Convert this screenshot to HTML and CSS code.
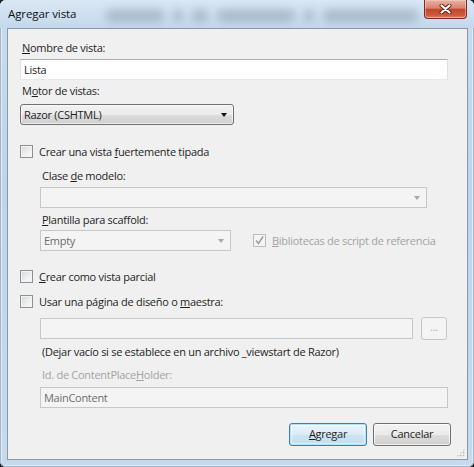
FILE: index.html
```html
<!DOCTYPE html>
<html lang="es">
 <head>
  <meta charset="utf-8" />
  <title>Agregar vista</title>
  <link rel="stylesheet" href="styles.css">
 </head>
 <body>
  <div class="window">
   <div class="titlebar">
    <span class="title">Agregar vista</span>
    <!-- whatever lies behind the glass, smeared -->
    <span class="glass">
     <i class="w1"></i><i class="w2"></i><i class="w3"></i><i class="w4"></i><i class="w5"></i><i class="w6"></i>
    </span>
    <span class="close">
     <svg width="13" height="10" viewBox="0 0 13 10">
      <path d="M2.5 1.5 L10.5 8.5 M10.5 1.5 L2.5 8.5" stroke="#5a1d12" stroke-width="4" stroke-linecap="round" />
      <path d="M2.5 1.5 L10.5 8.5 M10.5 1.5 L2.5 8.5" stroke="#fff" stroke-width="2.2" stroke-linecap="round" />
     </svg>
    </span>
   </div>
   <div class="client">
    <div class="lbl name-lbl"><u>N</u>ombre de vista:</div>
    <div class="text name-box">Lista</div>

    <div class="lbl engine-lbl">M<u>o</u>tor de vistas:</div>
    <div class="combo engine-box">Razor (CSHTML)<span class="arrow"></span></div>

    <div class="check-row typed-row">
     <span class="check"></span>
     <span>Crear una vista <u>f</u>uertemente tipada</span>
    </div>

    <div class="lbl indent model-lbl">Clase <u>d</u>e modelo:</div>
    <div class="text off indent model-box"><span class="arrow grey"></span></div>

    <div class="lbl indent tmpl-lbl"><u>P</u>lantilla para scaffold:</div>
    <div class="indent tmpl-row">
     <div class="text off tmpl-box">Empty<span class="arrow grey"></span></div>
     <div class="check-row dim">
      <span class="check off">
       <svg width="11" height="11" viewBox="0 0 11 11"><polyline points="2,5.5 4.5,8.5 9,1.5" fill="none" stroke="#9a9a9a" stroke-width="1.4" /></svg>
      </span>
      <span><u>B</u>ibliotecas de script de referencia</span>
     </div>
    </div>

    <div class="check-row partial-row">
     <span class="check"></span>
     <span><u>C</u>rear como vista parcial</span>
    </div>

    <div class="check-row master-row">
     <span class="check"></span>
     <span>Usar una página de diseño o <u>m</u>aestra:</span>
    </div>

    <div class="indent master-box">
     <div class="text off master-path"></div>
     <div class="dots">...</div>
    </div>

    <div class="lbl indent hint">(Dejar vacío si se establece en un archivo _viewstart de Razor)</div>

    <div class="lbl indent dim holder-lbl">Id. de ContentPlace<u>H</u>older:</div>
    <div class="text off indent holder-box">MainContent</div>

    <div class="buttons">
     <div class="btn default"><u>A</u>gregar</div>
     <div class="btn">Cancelar</div>
    </div>
    <span class="grip"></span>
   </div>
  </div>
 </body>
</html>
```

FILE: styles.css
```css
* { margin: 0; padding: 0; }
body {
  width: 474px;
  height: 467px;
  overflow: hidden;
  background-color: #1d232b;
  color: #1e1e1e;
  font-family: "Open Sans", "Noto Sans", sans-serif;
  font-size: 11px;
  letter-spacing: -0.28px;
}
u { text-decoration: underline; text-underline-offset: 1px; }

/* aero frame */
.window {
  box-sizing: border-box;
  width: 474px;
  height: 467px;
  padding: 0 6px 7px 7px;
  border-radius: 6px;
  background: linear-gradient(180deg, #c9dbee 0%, #bfd4ea 40%, #c6daef 100%);
  box-shadow: inset 0 0 0 1px #9fb6cf, inset 0 0 0 2px #e1ecf7;
}
.titlebar {
  height: 28px;
  display: flex;
  align-items: flex-start;
  background: linear-gradient(180deg, #dae7f4 0%, #c4d8ed 100%);
  margin: 0 -6px 0 -7px;
  padding-left: 8px;
  border-radius: 6px 6px 0 0;
  overflow: hidden;
}
.title {
  margin-top: 6px;
  font-size: 11.5px;
  letter-spacing: -0.1px;
  color: #111;
  white-space: nowrap;
}
.glass {
  margin: 9px 0 0 30px;
  display: flex;
  gap: 9px;
  filter: blur(4px);
}
.glass i {
  display: block;
  height: 13px;
  border-radius: 5px;
  background: rgba(35, 45, 70, .2);
}
.glass .w1 { width: 58px; }
.glass .w2 { width: 10px; }
.glass .w3 { width: 16px; }
.glass .w4 { width: 78px; }
.glass .w5 { width: 10px; }
.glass .w6 { width: 95px; }
.close {
  box-sizing: border-box;
  width: 43px;
  height: 19px;
  margin: 0 7px 0 auto;
  display: flex;
  align-items: center;
  justify-content: center;
  border: 1px solid #7a2e22;
  border-top: none;
  border-radius: 0 0 4px 4px;
  background: linear-gradient(180deg, #eab1a2 0%, #d98470 45%, #c4472d 52%, #cf5a3e 85%, #e08a6a 100%);
  box-shadow: inset 0 0 0 1px rgba(255, 220, 210, .45);
}

/* dialog body */
.client {
  position: relative;
  box-sizing: border-box;
  height: 432px;
  border: 1px solid #8c97a3;
  background: #f0f0f0;
  padding-left: 12px;
  display: flex;
  flex-direction: column;
  align-items: flex-start;
}
.lbl {
  height: 15px;
  line-height: 15px;
  padding-left: 2px;
  white-space: nowrap;
}
.indent { margin-left: 20px; }
.dim { color: #a3a3a3; }

.text {
  box-sizing: border-box;
  height: 21px;
  line-height: 19px;
  padding-left: 3px;
  border: 1px solid #abadb3;
  border-left-color: #e2e3ea;
  border-right-color: #dbdfe6;
  border-bottom-color: #e3e9ef;
  background: #fff;
  position: relative;
}
.text.off {
  background: #f4f4f4;
  border: 1px solid #c5c7ca;
  color: #6d6d6d;
}
.combo {
  box-sizing: border-box;
  height: 21px;
  line-height: 19px;
  padding-left: 3px;
  border: 1px solid #707070;
  border-radius: 3px;
  background: linear-gradient(180deg, #f2f2f2 0%, #ebebeb 50%, #dddddd 51%, #cfcfcf 100%);
  box-shadow: inset 0 0 0 1px rgba(255, 255, 255, .6);
  position: relative;
}
.arrow {
  position: absolute;
  right: 6px;
  top: 8px;
  width: 0;
  height: 0;
  border-left: 3.5px solid transparent;
  border-right: 3.5px solid transparent;
  border-top: 4px solid #111;
}
.arrow.grey { border-top-color: #a8a8a8; }

.check-row {
  height: 15px;
  display: flex;
  align-items: center;
  gap: 6px;
  white-space: nowrap;
}
.check {
  box-sizing: border-box;
  width: 13px;
  height: 13px;
  border: 1px solid #8e8f8f;
  background: linear-gradient(135deg, #d4d6d9 0%, #eef0f1 60%, #fafafa 100%);
  box-shadow: inset 0 0 0 1px #f4f4f4;
  display: flex;
  align-items: center;
  justify-content: center;
}
.check.off {
  border-color: #bcbcbc;
  background: #f4f4f4;
  box-shadow: none;
}

.name-lbl { margin-top: 11px; }
.name-box { margin-top: 4px; width: 428px; }
.engine-lbl { margin-top: 3px; }
.engine-box { margin-top: 6px; width: 214px; }
.typed-row { margin-top: 19px; }
.model-lbl { margin-top: 9px; }
.model-box { margin-top: 4px; width: 387px; }
.tmpl-lbl { margin-top: 4px; }
.tmpl-row {
  margin-top: 3px;
  display: flex;
  align-items: center;
  gap: 22px;
}
.tmpl-box { width: 191px; }
.partial-row { margin-top: 18px; }
.master-row { margin-top: 10px; }
.master-box {
  margin-top: 8px;
  display: flex;
  align-items: center;
  gap: 8px;
}
.master-path { width: 373px; }
.dots {
  box-sizing: border-box;
  width: 26px;
  height: 23px;
  line-height: 18px;
  text-align: center;
  border: 1px solid #c3c5c8;
  border-radius: 3px;
  background: #f4f4f4;
  color: #b0b0b0;
}
.hint { margin-top: 4px; }
.holder-lbl { margin-top: 8px; }
.holder-box { margin-top: 5px; width: 408px; color: #4a4a4a; }

.buttons {
  align-self: flex-end;
  margin: 15px 16px 0 0;
  display: flex;
  gap: 6px;
}
.btn {
  box-sizing: border-box;
  width: 78px;
  height: 23px;
  line-height: 20px;
  text-align: center;
  border: 1px solid #707070;
  border-radius: 3px;
  background: linear-gradient(180deg, #f2f2f2 0%, #ebebeb 50%, #dddddd 51%, #cfcfcf 100%);
  box-shadow: inset 0 0 0 1px rgba(255, 255, 255, .7);
}
.btn.default {
  border-color: #3c7fb1;
  background: linear-gradient(180deg, #eaf6fd 0%, #dcecf7 50%, #cde3f2 51%, #c4def0 100%);
  box-shadow: inset 0 0 0 1px #aee2fb, inset 0 0 0 2px rgba(255, 255, 255, .5);
}
.grip {
  position: absolute;
  right: 2px;
  bottom: 2px;
  width: 9px;
  height: 9px;
  background: radial-gradient(circle, #b8b8b8 0.8px, transparent 1.1px) 0 0 / 3px 3px;
  clip-path: polygon(100% 0, 100% 100%, 0 100%);
}
```
